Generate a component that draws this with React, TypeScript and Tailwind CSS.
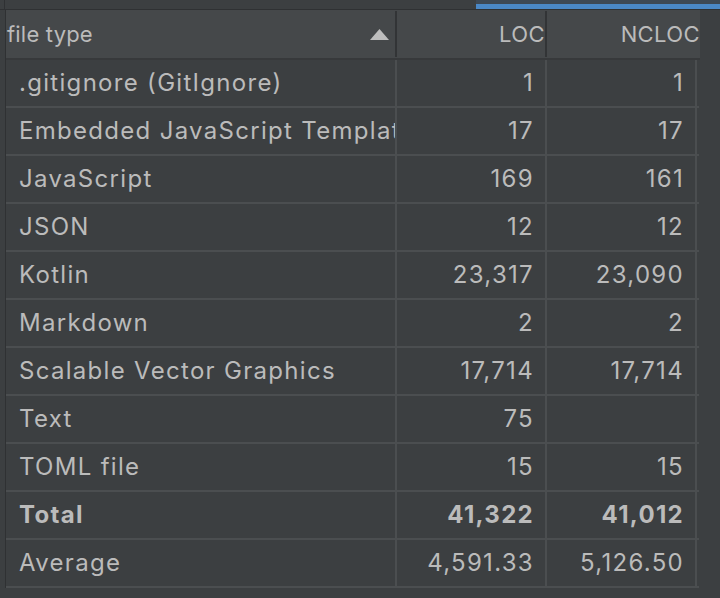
import React from "react";

const rows: { name: string; loc: string; ncloc: string; bold?: boolean }[] = [
  { name: ".gitignore (GitIgnore)", loc: "1", ncloc: "1" },
  { name: "Embedded JavaScript Templates", loc: "17", ncloc: "17" },
  { name: "JavaScript", loc: "169", ncloc: "161" },
  { name: "JSON", loc: "12", ncloc: "12" },
  { name: "Kotlin", loc: "23,317", ncloc: "23,090" },
  { name: "Markdown", loc: "2", ncloc: "2" },
  { name: "Scalable Vector Graphics", loc: "17,714", ncloc: "17,714" },
  { name: "Text", loc: "75", ncloc: "" },
  { name: "TOML file", loc: "15", ncloc: "15" },
  { name: "Total", loc: "41,322", ncloc: "41,012", bold: true },
  { name: "Average", loc: "4,591.33", ncloc: "5,126.50" },
];

export default function App() {
  return (
    <div
      className="w-[720px] h-[598px] bg-[#3c3f41] overflow-hidden text-[#bbbbbb]"
      style={{ fontFamily: "Inter, 'Noto Sans', sans-serif" }}
    >
      {/* top bar */}
      <div className="flex h-[10px] border-b border-[#2f3133]">
        <div className="w-[5px] border-r border-[#2f3133]" />
        <div className="flex-1" />
        <div className="w-[244px] bg-[#3d4956] flex flex-col justify-end">
          <div className="h-[5px] bg-[#4a88c7]" />
        </div>
      </div>
      <div className="flex">
        <div className="w-[6px] shrink-0 border-r border-[#2f3133] self-stretch" />
        <div className="flex flex-col">
          {/* header */}
          <div className="flex h-[50px] bg-[#45484a] w-[694px] border-b-2 border-[#37393b]">
            <div className="w-[391px] shrink-0 flex items-center justify-between border-r-2 border-[#323436] my-[1px] pr-[6px]">
              <span className="text-[22px] leading-none tracking-[0.2px] pl-[1px]">file type</span>
              <svg width="19" height="11" viewBox="0 0 19 11">
                <polygon points="9.5,0 19,11 0,11" fill="#bdbdbd" />
              </svg>
            </div>
            <div className="w-[150px] shrink-0 flex items-center justify-end border-r-2 border-[#323436] my-[1px]">
              <span className="text-[22px] leading-none tracking-[0.4px]">LOC</span>
            </div>
            <div className="w-[153px] shrink-0 flex items-center justify-end">
              <span className="text-[22px] leading-none tracking-[0.4px]">NCLOC</span>
            </div>
          </div>
          {/* body */}
          {rows.map((r) => (
            <div key={r.name} className="flex h-[48px] w-[693px] border-b-2 border-[#4b4e50]">
              <div className="w-[391px] shrink-0 flex items-center border-r-2 border-[#4b4e50] pl-[13px] overflow-hidden whitespace-nowrap">
                <span className={`text-[24px] leading-none tracking-[1.3px] ${r.bold ? "font-bold" : ""}`}>{r.name}</span>
              </div>
              <div className="w-[150px] shrink-0 flex items-center justify-end border-r-2 border-[#4b4e50] pr-[11px]">
                <span className={`text-[24px] leading-none tracking-[1.3px] ${r.bold ? "font-bold" : ""}`}>{r.loc}</span>
              </div>
              <div className="w-[150px] shrink-0 flex items-center justify-end border-r-2 border-[#4b4e50] pr-[11px]">
                <span className={`text-[24px] leading-none tracking-[1.3px] ${r.bold ? "font-bold" : ""}`}>{r.ncloc}</span>
              </div>
            </div>
          ))}
        </div>
      </div>
    </div>
  );
}
